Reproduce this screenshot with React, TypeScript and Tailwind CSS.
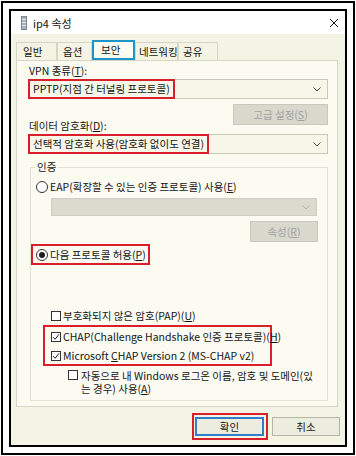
import type { ReactNode } from 'react'
import clsx from 'clsx'

const FONT = "font-['Noto_Sans_CJK_KR','Noto_Sans',sans-serif]"
const RED = 'border-[#da1f2c]'

function Chevron({ muted }: { muted?: boolean }) {
  return (
    <svg width="8" height="5" viewBox="0 0 8 5" className="mr-[6px] shrink-0">
      <path d="M0.5 0.5 L4 4 L7.5 0.5" fill="none" stroke={muted ? '#b3b3a6' : '#4a4a4a'} strokeWidth="1" />
    </svg>
  )
}

function Combo({ children }: { children: ReactNode }) {
  return (
    <div className="flex h-[20px] items-stretch justify-between border border-[#c9c9ba] bg-[#f6f6e9]">
      <span className={clsx('-my-px -ml-px flex items-center whitespace-nowrap border-2 pl-[3px] pr-[3px]', RED)}>
        {children}
      </span>
      <span className="flex items-center">
        <Chevron />
      </span>
    </div>
  )
}

function Btn({ children, disabled, className }: { children: ReactNode; disabled?: boolean; className?: string }) {
  return (
    <div
      className={clsx(
        'flex items-center justify-center border',
        disabled ? 'border-[#c8c8bc] bg-[#d8d8cc] text-[#a2a2a2]' : 'border-[#b4b4a7] bg-[#ececdf]',
        className
      )}
    >
      {children}
    </div>
  )
}

function Radio({ checked }: { checked?: boolean }) {
  return (
    <span className="flex h-[12px] w-[12px] shrink-0 items-center justify-center rounded-full border border-[#333] bg-white">
      {checked && <span className="h-[6px] w-[6px] rounded-full bg-[#1e1e1e]" />}
    </span>
  )
}

function Check({ checked }: { checked?: boolean }) {
  return (
    <span className="flex h-[10px] w-[10px] shrink-0 items-center justify-center border border-[#333] bg-white">
      {checked && (
        <svg width="8" height="8" viewBox="0 0 8 8">
          <path d="M1 4.1 L3.1 6.3 L7 1.3" fill="none" stroke="#222" strokeWidth="1" />
        </svg>
      )}
    </span>
  )
}

function ServerIcon() {
  return (
    <svg width="6" height="14" viewBox="0 0 6 14" className="shrink-0">
      <rect x="0.5" y="0.5" width="5" height="13" fill="#aab3bb" stroke="#7d8790" />
      <path d="M1 3.5h4M1 6.5h4M1 9.5h4" stroke="#e4e8eb" strokeWidth="1" />
    </svg>
  )
}

const TABS = [
  { label: '일반', w: 'w-[41px] pl-[6px]' },
  { label: '옵션', w: 'w-[35px] pl-[5px]' },
  { label: '보안', w: 'w-[43px] pl-[7px]', active: true },
  { label: '네트워킹', w: 'w-[43px] pl-[3px]' },
  { label: '공유', w: 'w-[40px] pl-[4px]' },
]

export default function App() {
  return (
    <div className={clsx('h-[456px] w-[356px] bg-white p-px text-[10.5px] leading-[16px] text-[#151515]', FONT)}>
      <div className="h-full border-2 border-black p-[6px]">
        <div className="flex h-full flex-col border-2 border-black bg-[#f4f4e5]">
          {/* Title bar */}
          <div className="flex h-[23px] shrink-0 items-center bg-white pl-[10px] pr-[7px]">
            <ServerIcon />
            <span className="ml-[6px] text-[11px]">ip4 속성</span>
            <svg width="8" height="8" viewBox="0 0 8 8" className="ml-auto">
              <path d="M0 0L8 8M8 0L0 8" stroke="#111" strokeWidth="1" />
            </svg>
          </div>

          <div className="flex flex-1 flex-col px-[5px] pt-[6px]">
            {/* Tabs */}
            <div className="flex h-[20px] items-end">
              {TABS.map((t) =>
                t.active ? (
                  <div
                    key={t.label}
                    className={clsx('flex h-[20px] items-center whitespace-nowrap border-2 border-[#1d95c8] bg-[#fbfbf2]', t.w)}
                  >
                    {t.label}
                  </div>
                ) : (
                  <div
                    key={t.label}
                    className={clsx(
                      'flex h-[18px] items-center whitespace-nowrap border-l border-r border-t border-[#d6d6c6] bg-[#f4f4e5]',
                      t.w
                    )}
                  >
                    {t.label}
                  </div>
                )
              )}
            </div>

            {/* Panel */}
            <div className="flex h-[347px] w-[322px] flex-col border border-[#d6d6c6] bg-[#fbfbf2] pb-[5px] pl-[11px] pr-[9px]">
              <div className="mt-[2px] pl-[1px]">
                VPN 종류(<u>T</u>):
              </div>
              <Combo>PPTP(지점 간 터널링 프로토콜)</Combo>
              <Btn disabled className="mt-[5px] h-[21px] w-[95px] self-end">
                고급 설정(<u>S</u>)
              </Btn>
              <div className="-mt-[7px] pl-[1px]">
                데이터 암호화(<u>D</u>):
              </div>
              <Combo>선택적 암호화 사용(암호화 없이도 연결)</Combo>

              <fieldset className="mt-[5px] ml-[2px] flex-1 border border-[#e2e2d2]">
                <legend className="ml-[4px] px-[2px]">인증</legend>
                <div className="flex flex-col">
                  <div className="mt-[4px] flex items-center gap-[2px] pl-[5px]">
                    <Radio />
                    <span className="whitespace-nowrap">
                      EAP(확장할 수 있는 인증 프로토콜) 사용(<u>E</u>)
                    </span>
                  </div>
                  <div className="ml-[20px] mr-[10px] mt-[3px] flex h-[18px] items-center justify-end border border-[#cdcdc1] bg-[#dadace]">
                    <Chevron muted />
                  </div>
                  <Btn disabled className="mr-[9px] mt-[5px] h-[21px] w-[68px] self-end">
                    속성(<u>R</u>)
                  </Btn>
                  <div
                    className={clsx(
                      'mt-[2px] flex h-[21px] items-center gap-[2px] self-start border-2 pl-[3px] pr-[2px]',
                      RED
                    )}
                  >
                    <Radio checked />
                    <span className="whitespace-nowrap">
                      다음 프로토콜 허용(<u>P</u>)
                    </span>
                  </div>

                  <div className="mt-[43px] flex items-center gap-[2px] pl-[20px]">
                    <Check />
                    <span className="whitespace-nowrap">
                      부호화되지 않은 암호(PAP)(<u>U</u>)
                    </span>
                  </div>
                  <div className={clsx('ml-[12px] mt-[1px] flex w-[229px] flex-col gap-[3px] border-2 pl-[6px] pt-[2px]', RED)}>
                    <div className="flex items-center gap-[2px]">
                      <Check checked />
                      <span className="whitespace-nowrap">
                        CHAP(Challenge Handshake 인증 프로토콜)(<u>H</u>)
                      </span>
                    </div>
                    <div className="flex items-center gap-[2px]">
                      <Check checked />
                      <span className="whitespace-nowrap">
                        Microsoft <u>C</u>HAP Version 2 (MS-CHAP v2)
                      </span>
                    </div>
                  </div>
                  <div className="mt-[3px] flex items-start gap-[3px] pl-[37px]">
                    <span className="mt-[1px]">
                      <Check />
                    </span>
                    <span className="whitespace-nowrap leading-[13px]">
                      자동으로 내 Windows 로그온 이름, 암호 및 도메인(있
                      <br />는 경우) 사용(<u>A</u>)
                    </span>
                  </div>
                </div>
              </fieldset>
            </div>

            {/* Buttons */}
            <div className="mt-[6px] flex items-center justify-end">
              <div className={clsx('border-2 pb-[2px] pl-[1px] pr-[2px] pt-[2px]', RED)}>
                <div className="flex h-[19px] w-[69px] items-center justify-center border-2 border-[#2f7dcb] bg-[#ececdf]">
                  확인
                </div>
              </div>
              <Btn className="ml-[4px] h-[19px] w-[68px]">취소</Btn>
            </div>
          </div>
        </div>
      </div>
    </div>
  )
}
